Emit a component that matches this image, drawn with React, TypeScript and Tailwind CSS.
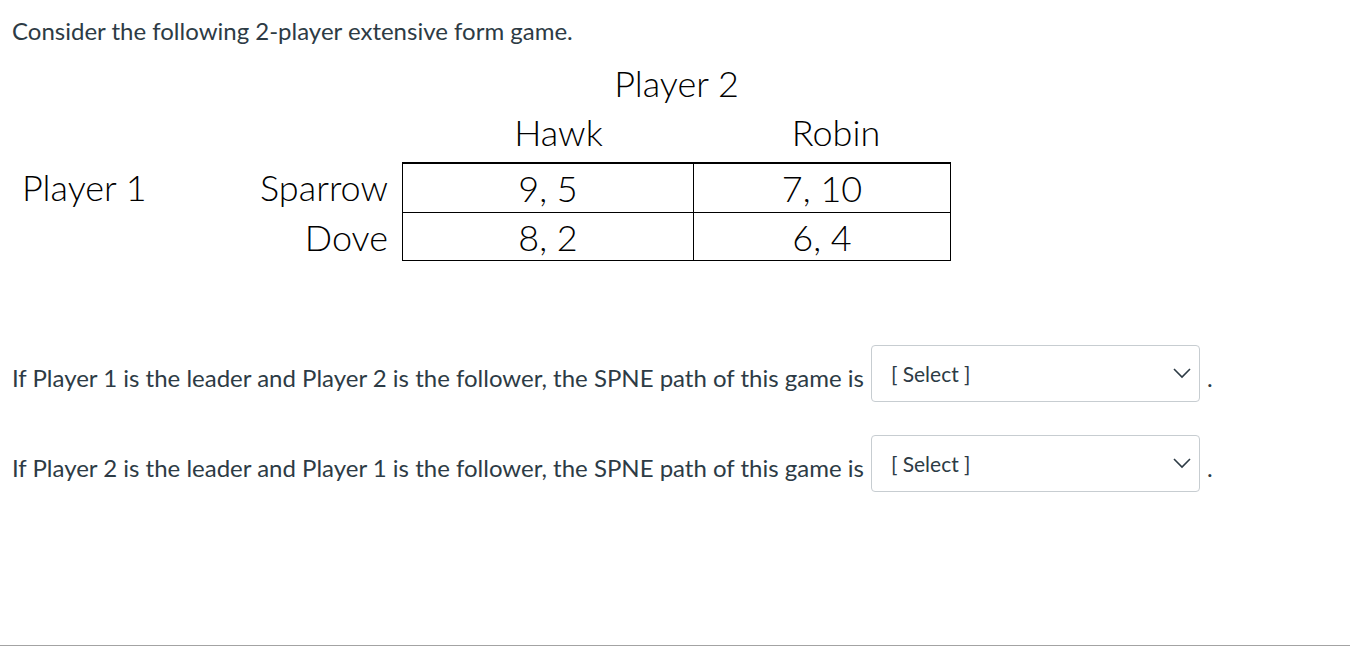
const ink = "text-[#2d3b45]";

function SelectBox() {
  return (
    <div className="flex h-[57px] w-[329px] shrink-0 items-start justify-between rounded-[4px] border border-[#c7cdd1] bg-white pl-[19px] pr-[8px] pt-[15px]">
      <span className={`text-[21px] leading-[25px] ${ink}`}>[ Select ]</span>
      <svg width="18" height="11" viewBox="0 0 18 11" className="mt-[7px]">
        <polyline points="1,1 9,9 17,1" fill="none" stroke="#2d3b45" strokeWidth="1.6" />
      </svg>
    </div>
  );
}

function Question({ lead, follow }: { lead: string; follow: string }) {
  return (
    <div className="flex items-start">
      <span className={`mt-[18px] mr-[7px] whitespace-nowrap text-[24px] leading-[29px] ${ink}`}>
        If {lead} is the leader and {follow} is the follower, the SPNE path of this game is
      </span>
      <SelectBox />
      <span className={`mt-[18px] ml-[7px] text-[24px] leading-[29px] ${ink}`}>.</span>
    </div>
  );
}

export default function App() {
  return (
    <div className="flex h-[650px] flex-col bg-white" style={{ fontFamily: "Lato, 'Liberation Sans', sans-serif" }}>
      <div className="pl-[12px] pt-[16px]">
        <p className={`text-[24px] leading-[29px] ${ink}`}>Consider the following 2-player extensive form game.</p>

        {/* payoff matrix */}
        <div
          className="mt-[18px] grid grid-cols-[390px_291px_258px] text-black font-light text-[36px]"
          style={{ fontFamily: "Lato, 'Open Sans', sans-serif" }}
        >
          <div />
          <div className="col-span-2 h-[49px] text-center leading-[40px]">Player 2</div>
          <div />
          <div className="h-[50px] pl-[22px] text-center leading-[40px]">Hawk</div>
          <div className="h-[50px] pl-[28px] text-center leading-[40px]">Robin</div>

          <div className="flex h-[50px] items-center justify-between pl-[10px] pr-[14px]">
            <span>Player 1</span>
            <span>Sparrow</span>
          </div>
          <div className="flex h-[50px] items-center justify-center border-l border-t-2 border-black">9, 5</div>
          <div className="flex h-[50px] items-center justify-center border-l border-r border-t-2 border-black">7, 10</div>

          <div className="flex h-[49px] items-center justify-end pr-[14px]">Dove</div>
          <div className="flex h-[49px] items-center justify-center border-l border-t border-b border-black">8, 2</div>
          <div className="flex h-[49px] items-center justify-center border border-black">6, 4</div>
        </div>

        <div className="mt-[84px] flex flex-col gap-[33px]">
          <Question lead="Player 1" follow="Player 2" />
          <Question lead="Player 2" follow="Player 1" />
        </div>
      </div>
      <div className="mt-auto h-[5px] border-t border-[#a3a3a3]" />
    </div>
  );
}
